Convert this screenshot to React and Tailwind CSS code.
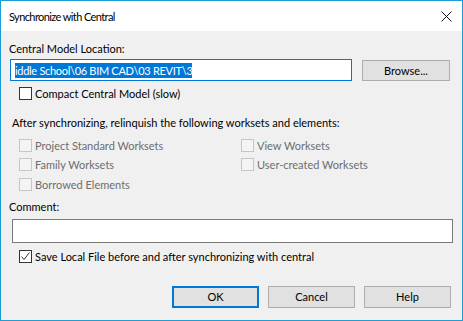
import React from "react";

const font = { fontFamily: 'Lato, "Noto Sans", sans-serif' };

function Box({ checked = false, disabled = false }) {
  return (
    <span
      className={
        "inline-flex w-[13px] h-[13px] shrink-0 items-center justify-center border " +
        (disabled ? "border-[#c6c6c6] bg-[#f4f4f4]" : "border-[#333333] bg-white")
      }
    >
      {checked && (
        <svg width="11" height="11" viewBox="0 0 11 11">
          <path d="M1.5 5.5 L4 8.5 L9.5 1.5" fill="none" stroke="#333" strokeWidth="1" />
        </svg>
      )}
    </span>
  );
}

function Check({ label, checked, disabled }) {
  return (
    <div className="flex items-center h-[19.5px] gap-[3px]">
      <Box checked={checked} disabled={disabled} />
      <span className={"leading-[15px] whitespace-nowrap " + (disabled ? "text-[#6d6d6d]" : "text-black")}>{label}</span>
    </div>
  );
}

function Btn({ children, primary }) {
  return (
    <div
      className={
        "w-[87px] h-[22px] flex items-center justify-center bg-[#e1e1e1] leading-[15px] " +
        (primary ? "border-2 border-[#0078d7]" : "border border-[#adadad]")
      }
    >
      {children}
    </div>
  );
}

export default function App() {
  return (
    <div
      style={font}
      className="w-[463px] h-[321px] border border-[#1b9ed8] flex flex-col text-[11px] text-black bg-[#f0f0f0] overflow-hidden"
    >
      <div className="h-[30px] bg-white flex items-center justify-between pl-[8px] pr-[10px] shrink-0">
        <span className="leading-[15px] mt-[1px] text-[11px] tracking-[-0.6px]">Synchronize with Central</span>
        <svg width="11" height="11" viewBox="0 0 11 11" className="mt-[1px]">
          <path d="M0.5 0.5 L10.5 10.5 M10.5 0.5 L0.5 10.5" stroke="#111" strokeWidth="1" />
        </svg>
      </div>
      <div className="flex-1 flex flex-col pl-[8px] pr-[11px]">
        <div className="mt-[10px] leading-[15px]">Central Model Location:</div>
        <div className="mt-[3px] flex gap-[10px] pl-[1px]">
          <div className="w-[342px] h-[22px] bg-white border border-[#0078d7] flex items-center pl-[4px] overflow-hidden">
            <span className="bg-[#0078d7] text-white leading-[15px] whitespace-nowrap tracking-[-0.3px]">iddle School\06 BIM CAD\03 REVIT\3</span>
          </div>
          <div className="w-[88px] h-[21px] mt-[1px] bg-[#e1e1e1] border border-[#adadad] flex items-center justify-center leading-[15px]">
            Browse...
          </div>
        </div>
        <div className="mt-[3px] pl-[10px]">
          <Check label="Compact Central Model (slow)" />
        </div>
        <div className="mt-[11px] pl-[3px] leading-[15px]">After synchronizing, relinquish the following worksets and elements:</div>
        <div className="mt-[6px] pl-[10px] grid grid-cols-[222px_1fr]">
          <Check label="Project Standard Worksets" disabled />
          <Check label="View Worksets" disabled />
          <Check label="Family Worksets" disabled />
          <Check label="User-created Worksets" disabled />
          <Check label="Borrowed Elements" disabled />
        </div>
        <div className="mt-[5px] leading-[15px]">Comment:</div>
        <div className="mt-[5px] ml-[3px] w-[441px] h-[24px] bg-white border border-[#7a7a7a]" />
        <div className="mt-[4px] pl-[10px]">
          <Check label="Save Local File before and after synchronizing with central" checked />
        </div>
        <div className="mt-[19px] flex justify-end gap-[9px]">
          <Btn primary>OK</Btn>
          <Btn>Cancel</Btn>
          <Btn>Help</Btn>
        </div>
      </div>
    </div>
  );
}
